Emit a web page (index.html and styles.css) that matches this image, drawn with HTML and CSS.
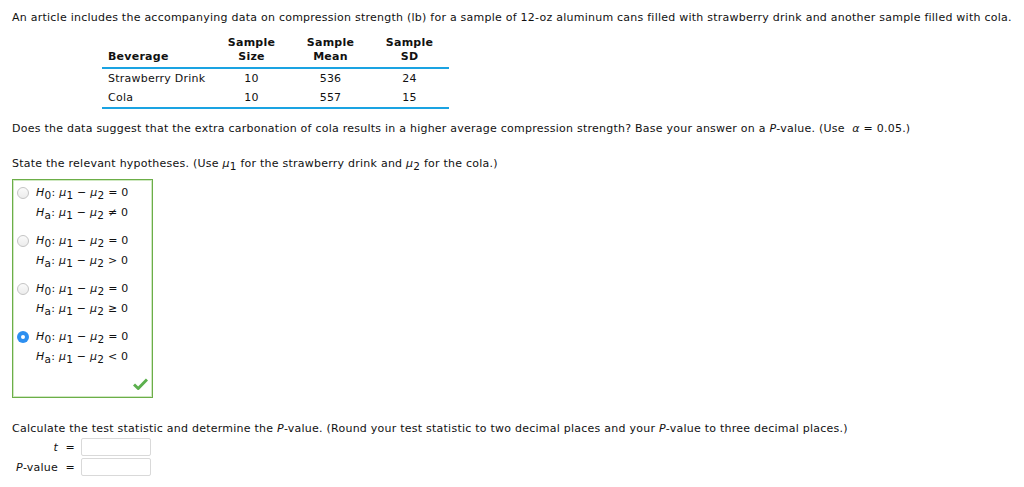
FILE: index.html
```html
<!DOCTYPE html>
<html>
<head>
<meta charset="utf-8">
<link rel="stylesheet" href="styles.css">
</head>
<body>
<div class="page">
  <p class="intro">An article includes the accompanying data on compression strength (lb) for a sample of 12-oz aluminum cans filled with strawberry drink and another sample filled with cola.</p>
  <table class="data">
    <thead>
      <tr>
        <th class="c-bev">Beverage</th>
        <th class="c-num">Sample<br>Size</th>
        <th class="c-num">Sample<br>Mean</th>
        <th class="c-num">Sample<br>SD</th>
      </tr>
    </thead>
    <tbody>
      <tr><td class="c-bev">Strawberry Drink</td><td class="c-num">10</td><td class="c-num">536</td><td class="c-num">24</td></tr>
      <tr><td class="c-bev">Cola</td><td class="c-num">10</td><td class="c-num">557</td><td class="c-num">15</td></tr>
    </tbody>
  </table>
  <p class="q1">Does the data suggest that the extra carbonation of cola results in a higher average compression strength? Base your answer on a <i>P</i>-value. (Use &nbsp;<i>α</i> = 0.05.)</p>
  <p class="q2">State the relevant hypotheses. (Use <i>μ</i><sub>1</sub> for the strawberry drink and <i>μ</i><sub>2</sub> for the cola.)</p>
  <div class="choices">
    <div class="opt">
      <span class="radio"></span>
      <div class="hyp">
        <div class="ln"><i>H</i><sub>0</sub>: <i>μ</i><sub>1</sub> − <i>μ</i><sub>2</sub> = 0</div>
        <div class="ln"><i>H</i><sub>a</sub>: <i>μ</i><sub>1</sub> − <i>μ</i><sub>2</sub> ≠ 0</div>
      </div>
    </div>
    <div class="opt">
      <span class="radio"></span>
      <div class="hyp">
        <div class="ln"><i>H</i><sub>0</sub>: <i>μ</i><sub>1</sub> − <i>μ</i><sub>2</sub> = 0</div>
        <div class="ln"><i>H</i><sub>a</sub>: <i>μ</i><sub>1</sub> − <i>μ</i><sub>2</sub> &gt; 0</div>
      </div>
    </div>
    <div class="opt">
      <span class="radio"></span>
      <div class="hyp">
        <div class="ln"><i>H</i><sub>0</sub>: <i>μ</i><sub>1</sub> − <i>μ</i><sub>2</sub> = 0</div>
        <div class="ln"><i>H</i><sub>a</sub>: <i>μ</i><sub>1</sub> − <i>μ</i><sub>2</sub> ≥ 0</div>
      </div>
    </div>
    <div class="opt">
      <span class="radio on"></span>
      <div class="hyp">
        <div class="ln"><i>H</i><sub>0</sub>: <i>μ</i><sub>1</sub> − <i>μ</i><sub>2</sub> = 0</div>
        <div class="ln"><i>H</i><sub>a</sub>: <i>μ</i><sub>1</sub> − <i>μ</i><sub>2</sub> &lt; 0</div>
      </div>
    </div>
    <div class="check">
      <svg width="15" height="12" viewBox="0 0 15 12"><path d="M1 6.5 L5.2 10.5 L14 1.5" fill="none" stroke="#5cb04e" stroke-width="3" stroke-linejoin="round"/></svg>
    </div>
  </div>
  <p class="q3">Calculate the test statistic and determine the <i>P</i>-value. (Round your test statistic to two decimal places and your <i>P</i>-value to three decimal places.)</p>
  <div class="answers">
    <div class="arow"><span class="lbl"><i>t</i> &nbsp;=</span><span class="box"></span></div>
    <div class="arow"><span class="lbl"><i>P</i>-value &nbsp;=</span><span class="box"></span></div>
  </div>
</div>
</body>
</html>
```
FILE: styles.css
```css
html, body {
  margin: 0;
  padding: 0;
  background: #fff;
}
body {
  font-family: Verdana, "DejaVu Sans", sans-serif;
  font-size: 11px;
  letter-spacing: 0.24px;
  color: #111;
}
.page {
  padding: 10px 0 0 12px;
}
p {
  margin: 0;
  line-height: 16px;
}
sub {
  font-size: 10.5px;
  vertical-align: -3px;
  line-height: 0;
}
.data {
  border-collapse: collapse;
  margin: 9px 0 0 90px;
  width: 347px;
}
.data th {
  font-weight: bold;
  line-height: 14px;
  padding: 1px 0 3px 0;
  vertical-align: bottom;
}
.data thead tr {
  border-bottom: 2px solid #1aa3e2;
}
.data tbody tr:last-child {
  border-bottom: 2px solid #1aa3e2;
}
.data td {
  line-height: 15px;
  padding: 2px 0 2px 0;
}
.c-bev {
  text-align: left;
  padding-left: 6px !important;
  width: 104px;
}
.c-num {
  text-align: center;
  width: 79px;
}
.q1 {
  margin-top: 12px;
}
.q2 {
  margin-top: 19px;
}
.choices {
  margin-top: 7px;
  width: 141px;
  border: 1px solid #6cae48;
  box-shadow: inset 0 0 0 1px #cfe8c2;
  padding: 3px 0 0 0;
  box-sizing: border-box;
  height: 219px;
  display: flex;
  flex-direction: column;
}
.opt {
  display: flex;
  align-items: flex-start;
  height: 40px;
  margin-bottom: 8px;
}
.radio {
  width: 12px;
  height: 12px;
  border: 1px solid #c4c4c4;
  border-radius: 50%;
  background: linear-gradient(#fafafa, #ececec);
  margin: 4px 7px 0 4px;
  box-sizing: border-box;
  flex: none;
  position: relative;
}
.radio.on {
  border: none;
  background: #2d8ff0;
}
.radio.on::after {
  content: "";
  position: absolute;
  left: 4px;
  top: 4px;
  width: 4px;
  height: 4px;
  border-radius: 50%;
  background: #fff;
}
.hyp .ln {
  line-height: 20px;
  height: 20px;
  white-space: nowrap;
}
.check {
  margin-top: auto;
  display: flex;
  justify-content: flex-end;
  padding: 0 4px 7px 0;
}
.q3 {
  margin-top: 23px;
}
.answers {
  margin-top: 0;
}
.arow {
  display: flex;
  align-items: center;
  height: 20px;
}
.lbl {
  width: 63px;
  text-align: right;
  padding-right: 6px;
  white-space: nowrap;
}
.box {
  width: 70px;
  height: 18px;
  border: 1px solid #d9d9d9;
  border-radius: 2px;
  box-sizing: border-box;
  background: #fff;
}
```
